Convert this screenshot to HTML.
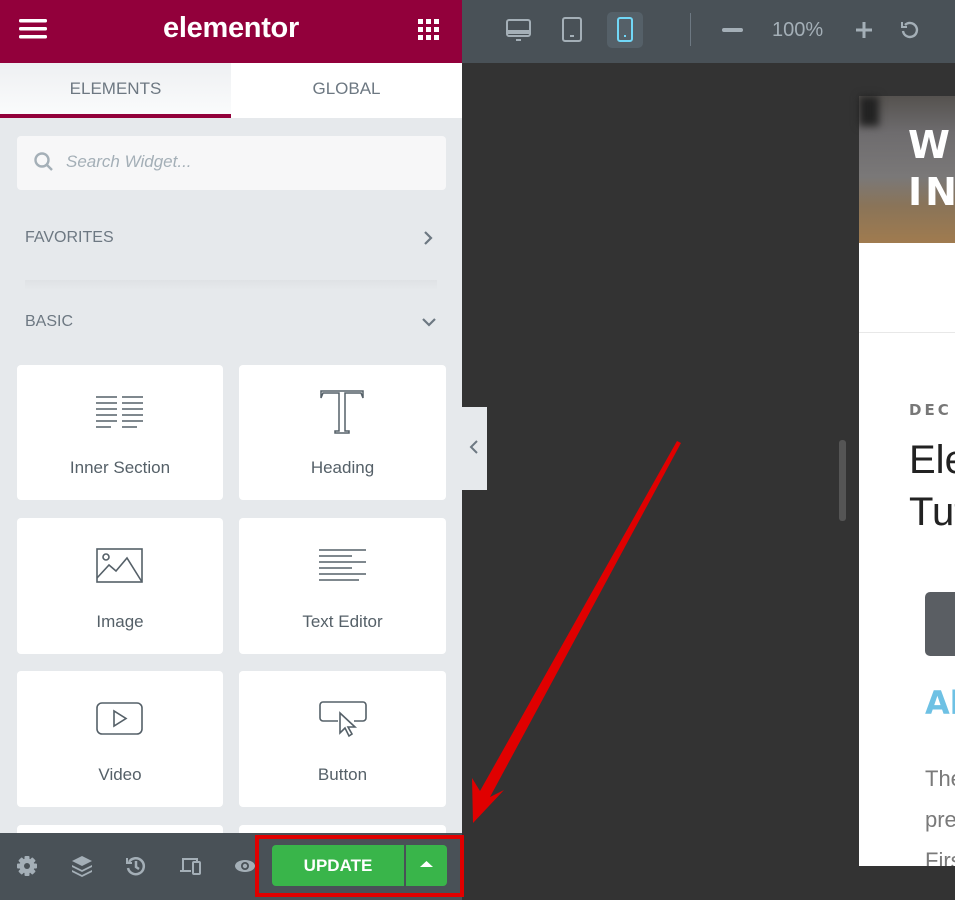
<!DOCTYPE html>
<html><head><meta charset="utf-8"><style>
*{margin:0;padding:0;box-sizing:border-box}
body{width:955px;height:900px;overflow:hidden;background:#333;font-family:"Liberation Sans",sans-serif;position:relative}
.abs{position:absolute}
#side{left:0;top:0;width:462px;height:900px;background:#e6e9ec}
#hdr{left:0;top:0;width:462px;height:63px;background:#92003b}
.logo{left:0;width:462px;top:12px;text-align:center;color:#fff;font-weight:bold;font-size:29px;letter-spacing:-0.3px}
.tab{top:63px;height:55px;line-height:52px;text-align:center;font-size:17px;color:#6d7882}
.card{background:#fff;border-radius:4px;width:206px}
.card .lbl{position:absolute;left:0;right:0;text-align:center;font-size:17px;color:#556068}
.sec{font-size:16px;color:#6d7882}
#top{left:462px;top:0;width:493px;height:63px;background:#495157}
#bot{left:0;top:833px;width:462px;height:67px;background:#495157}
</style></head><body>
<div id="side" class="abs"></div>
<div id="hdr" class="abs"></div>
<svg class="abs" style="left:19px;top:19px" width="28" height="20"><rect y="0" width="28" height="3.5" rx="1.5" fill="#fff"/><rect y="8" width="28" height="3.5" rx="1.5" fill="#fff"/><rect y="16" width="28" height="3.5" rx="1.5" fill="#fff"/></svg>
<div class="abs logo">elementor</div>
<svg class="abs" style="left:418px;top:19px" width="22" height="21" fill="#fff"><rect x="0" y="0" width="5" height="5"/><rect x="8" y="0" width="5" height="5"/><rect x="16" y="0" width="5" height="5"/><rect x="0" y="8" width="5" height="5"/><rect x="8" y="8" width="5" height="5"/><rect x="16" y="8" width="5" height="5"/><rect x="0" y="16" width="5" height="5"/><rect x="8" y="16" width="5" height="5"/><rect x="16" y="16" width="5" height="5"/></svg>
<div class="abs tab" style="left:0;width:231px;background:linear-gradient(#eef0f2,#fafbfc);border-bottom:4px solid #92003b">ELEMENTS</div>
<div class="abs tab" style="left:231px;width:231px;background:#fff">GLOBAL</div>
<div class="abs" style="left:17px;top:136px;width:429px;height:54px;background:#f7f7f8;border-radius:4px"></div>
<svg class="abs" style="left:34px;top:152px" width="20" height="20" fill="none" stroke="#a4afb7" stroke-width="2.4"><circle cx="8" cy="8" r="6.5"/><path d="M13 13l5 5"/></svg>
<div class="abs" style="left:66px;top:152px;font-size:17px;font-style:italic;color:#a4afb7">Search Widget...</div>
<div class="abs sec" style="left:25px;top:229px">FAVORITES</div>
<svg class="abs" style="left:423px;top:230px" width="10" height="16" fill="none" stroke="#6d7882" stroke-width="2.2"><path d="M2 2l6 6-6 6"/></svg>
<div class="abs" style="left:25px;top:280px;width:412px;height:10px;background:linear-gradient(#dfe2e5,#e6e9ec)"></div>
<div class="abs sec" style="left:25px;top:313px">BASIC</div>
<svg class="abs" style="left:421px;top:317px" width="16" height="10" fill="none" stroke="#6d7882" stroke-width="2.2"><path d="M2 2l6 6 6-6"/></svg>

<div class="abs card" style="left:17px;top:365px;height:135px"><div class="lbl" style="top:93px">Inner Section</div>
<svg class="abs" style="left:79px;top:30px" width="48" height="34" stroke="#556068" stroke-width="1.6"><path d="M0 2h21M26 2h21M0 8h21M26 8h21M0 14h21M26 14h21M0 20h21M26 20h21M0 26h21M26 26h21M0 32h15M26 32h15"/></svg></div>
<div class="abs card" style="left:239px;top:365px;height:135px;width:207px"><div class="lbl" style="top:93px">Heading</div>
<svg class="abs" style="left:81px;top:25px" width="44" height="44" fill="none" stroke="#556068" stroke-width="1.5"><path d="M1 8V1h42v7l-2-5H25v38h4v2H15v-2h4V3H3z"/></svg></div>
<div class="abs card" style="left:17px;top:518px;height:136px"><div class="lbl" style="top:94px">Image</div>
<svg class="abs" style="left:79px;top:30px" width="48" height="36" fill="none" stroke="#556068" stroke-width="1.6"><rect x="1" y="1" width="45" height="33"/><circle cx="10" cy="9" r="3"/><path d="M1 30l12-13 7 6 11-13 15 24"/></svg></div>
<div class="abs card" style="left:239px;top:518px;height:136px;width:207px"><div class="lbl" style="top:94px">Text Editor</div>
<svg class="abs" style="left:80px;top:30px" width="48" height="34" stroke="#556068" stroke-width="1.6"><path d="M0 2h47M0 8h33M0 14h47M0 20h33M0 26h47M0 32h40"/></svg></div>
<div class="abs card" style="left:17px;top:671px;height:136px"><div class="lbl" style="top:94px">Video</div>
<svg class="abs" style="left:79px;top:30px" width="48" height="36" fill="none" stroke="#556068" stroke-width="1.6"><rect x="1" y="2" width="45" height="31" rx="5"/><path d="M18 10v15l12-7.5z"/></svg></div>
<div class="abs card" style="left:239px;top:671px;height:136px;width:207px"><div class="lbl" style="top:94px">Button</div>
<svg class="abs" style="left:80px;top:30px" width="48" height="38" fill="none" stroke="#556068" stroke-width="1.6"><path d="M19 20H4a3 3 0 0 1-3-3V4a3 3 0 0 1 3-3h40a3 3 0 0 1 3 3v13a3 3 0 0 1-3 3h-9"/><path d="M21 12v20l5-5 4 8 3-2-4-7h7z"/></svg></div>
<div class="abs card" style="left:17px;top:825px;height:20px"></div>
<div class="abs card" style="left:239px;top:825px;height:20px;width:207px"></div>

<div id="bot" class="abs"></div>
<svg class="abs" style="left:17px;top:856px" width="20" height="20"><g fill="#a4afb7"><rect x="7.5" y="0" width="5" height="20" rx="1"/><rect x="7.5" y="0" width="5" height="20" rx="1" transform="rotate(45 10 10)"/><rect x="7.5" y="0" width="5" height="20" rx="1" transform="rotate(90 10 10)"/><rect x="7.5" y="0" width="5" height="20" rx="1" transform="rotate(135 10 10)"/><circle cx="10" cy="10" r="7.5"/></g><circle cx="10" cy="10" r="3" fill="#495157"/></svg>
<svg class="abs" style="left:71px;top:855px" width="22" height="22" fill="#a4afb7"><path d="M11 1l10 5-10 5L1 6z"/><path d="M1 10l10 5 10-5v2l-10 5-10-5zM1 15l10 5 10-5v2l-10 5-10-5z"/></svg>
<svg class="abs" style="left:125px;top:855px" width="22" height="22" fill="none" stroke="#a4afb7" stroke-width="2.5"><path d="M4 7a8 8 0 1 1-1 6"/><path d="M2 3v5h5" stroke-width="2"/><path d="M11 6v6l3 2"/></svg>
<svg class="abs" style="left:180px;top:856px" width="22" height="20" fill="none" stroke="#a4afb7" stroke-width="2"><path d="M3 14V3h14v3"/><path d="M0 15h11"/><rect x="13" y="6" width="7" height="12" rx="1"/></svg>
<svg class="abs" style="left:234px;top:859px" width="22" height="14"><ellipse cx="11" cy="7" rx="10" ry="6" fill="#a4afb7"/><circle cx="11" cy="7" r="4" fill="#495157"/><circle cx="11" cy="7" r="2.2" fill="#a4afb7"/></svg>
<div class="abs" style="left:255px;top:835px;width:209px;height:62px;border:4px solid #e00000"></div>
<div class="abs" style="left:260px;top:839px;width:199px;height:54px;background:#495157"></div>
<div class="abs" style="left:272px;top:845px;width:132px;height:41px;background:#39b54a;border-radius:4px 0 0 4px;color:#fff;font-weight:bold;font-size:17px;line-height:41px;text-align:center">UPDATE</div>
<div class="abs" style="left:406px;top:845px;width:41px;height:41px;background:#39b54a;border-radius:0 4px 4px 0"></div>
<svg class="abs" style="left:420px;top:860px" width="13" height="8"><path d="M0 7l6.5-6 6.5 6z" fill="#fff"/></svg>

<div id="top" class="abs"></div>
<div class="abs" style="left:607px;top:12px;width:36px;height:36px;background:#556068;border-radius:5px"></div>
<svg class="abs" style="left:506px;top:18px" width="26" height="24" fill="none" stroke="#a4afb7" stroke-width="2"><rect x="1" y="2" width="23" height="16" rx="2"/><path d="M1 14h23" stroke-width="4"/><path d="M10 22h5"/></svg>
<svg class="abs" style="left:562px;top:17px" width="20" height="26" fill="none" stroke="#a4afb7" stroke-width="2"><rect x="1" y="1" width="18" height="23" rx="2"/><path d="M8 19h4"/></svg>
<svg class="abs" style="left:616px;top:17px" width="18" height="26" fill="none" stroke="#71d7f7" stroke-width="2"><rect x="2" y="1" width="14" height="23" rx="2"/><path d="M8 19h2"/></svg>
<div class="abs" style="left:690px;top:13px;width:1px;height:33px;background:#6d7882"></div>
<div class="abs" style="left:722px;top:28px;width:21px;height:4px;background:#a4afb7;border-radius:2px"></div>
<div class="abs" style="left:772px;top:19px;font-size:20px;color:#a4afb7">100%</div>
<svg class="abs" style="left:855px;top:21px" width="18" height="18" stroke="#a4afb7" stroke-width="3"><path d="M9 1v16M1 9h16"/></svg>
<svg class="abs" style="left:901px;top:20px" width="18" height="20" fill="none" stroke="#a4afb7" stroke-width="2.4"><path d="M4 5a7 7 0 1 1-2 6"/><path d="M1 2v5h5" stroke-width="2"/></svg>

<div class="abs" style="left:462px;top:407px;width:25px;height:83px;background:#e6e9ec"></div>
<svg class="abs" style="left:469px;top:440px" width="10" height="14" fill="none" stroke="#6d7882" stroke-width="2"><path d="M8 1L2 7l6 6"/></svg>
<div class="abs" style="left:839px;top:440px;width:7px;height:81px;background:#555;border-radius:3px"></div>

<div class="abs" style="left:859px;top:96px;width:96px;height:770px;background:#fff"></div>
<div class="abs" style="left:859px;top:96px;width:96px;height:147px;background:linear-gradient(#55524f 0%,#6e6c6e 25%,#7a7878 55%,#8a7458 75%,#a07b4f 100%)"></div>
<div class="abs" style="left:859px;top:96px;width:20px;height:30px;background:#222;filter:blur(4px)"></div>
<div class="abs" style="left:908px;top:122px;font-weight:bold;font-size:38px;line-height:47px;color:#fff;letter-spacing:3px;font-family:'DejaVu Sans',sans-serif">W<br>IN</div>
<div class="abs" style="left:859px;top:332px;width:96px;height:1px;background:#e8e8e8"></div>
<div class="abs" style="left:909px;top:401px;font-weight:bold;font-size:15px;letter-spacing:3px;color:#777;font-family:'DejaVu Sans',sans-serif">DEC</div>
<div class="abs" style="left:909px;top:434px;font-size:40px;line-height:52px;color:#222">Ele<br>Tut</div>
<div class="abs" style="left:925px;top:592px;width:40px;height:64px;background:#5a5e63;border-radius:5px"></div>
<div class="abs" style="left:925px;top:684px;font-weight:bold;font-size:32px;color:#6ec1e4;font-family:'DejaVu Sans',sans-serif">Ab</div>
<div class="abs" style="left:925px;top:758px;font-size:22px;line-height:41px;color:#7a7a7a">The<br>pre<br>Firs</div>
<div class="abs" style="left:859px;top:866px;width:96px;height:34px;background:#333"></div>

<svg class="abs" style="left:460px;top:435px" width="230" height="400"><path d="M221 8 L30 362 L44 355 L13 388 L12 343 L20 356 L217 6 Z" fill="#e00000"/></svg>
</body></html>
